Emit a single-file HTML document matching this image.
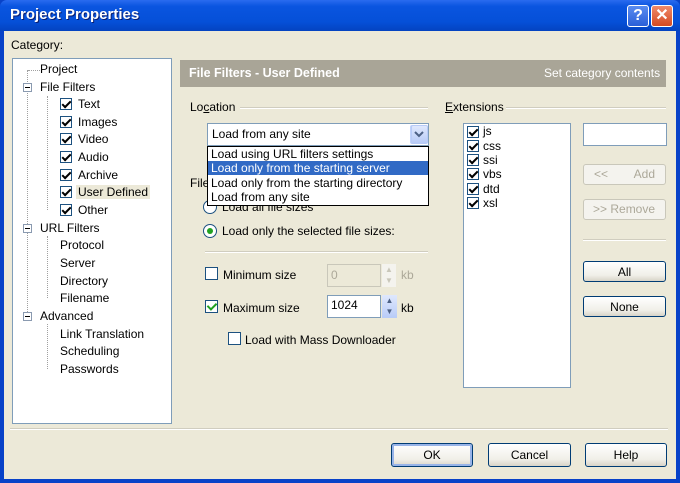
<!DOCTYPE html>
<html><head><style>
*{margin:0;padding:0;box-sizing:border-box}
body{width:680px;height:483px;overflow:hidden;font-family:"Liberation Sans",sans-serif;font-size:12px;color:#000;background:#0842c8;position:relative}
.a{position:absolute;white-space:nowrap}
.win{position:absolute;left:4px;top:31px;width:672px;height:448px;background:#ECE9D8}
.title{position:absolute;left:0;top:0;width:680px;height:31px;background:linear-gradient(#2a6bef,#0a55e0 20%,#0550d8 70%,#0443c0);border-radius:7px 7px 0 0}
.tree{position:absolute;left:12px;top:58px;width:160px;height:366px;background:#fff;border:1px solid #7f9db9}
.cb{position:absolute;width:13px;height:13px;border:1px solid #1c5180;background:#fff}
.cb.k::after{content:"";position:absolute;left:3px;top:0px;width:4px;height:7px;border:solid #21a121;border-width:0 2px 2px 0;transform:rotate(45deg)}
.tcb{position:absolute;width:12px;height:12px;border:1px solid #1c5180;background:#fff}
.tcb::after{content:"";position:absolute;left:3px;top:0px;width:3px;height:7px;border:solid #000;border-width:0 2px 2px 0;transform:rotate(45deg)}
.pm{position:absolute;width:9px;height:9px;border:1px solid #8a9ab0;background:#fff}
.pm::after{content:"";position:absolute;left:1px;top:3px;width:5px;height:1px;background:#000}
.dl{position:absolute;border-left:1px dotted #a0a0a0}
.dh{position:absolute;border-top:1px dotted #a0a0a0;width:12px}
.btn{position:absolute;border:1px solid #003c74;border-radius:3px;background:linear-gradient(#fff,#f0efe8 70%,#d8d4c8);text-align:center;line-height:20px}
.dbtn{position:absolute;border:1px solid #c9c7ba;border-radius:3px;background:#f4f3ee;color:#aca899;line-height:18px}
.sep{position:absolute;height:2px;border-top:1px solid #d0cdbf;border-bottom:1px solid #fff}
.inp{position:absolute;background:#fff;border:1px solid #7f9db9}
</style></head><body>
<div class="title"></div>
<div class="a" style="left:10px;top:6px;color:#fff;font-weight:bold;font-size:15px;text-shadow:1px 1px #0a1e70">Project Properties</div>
<div class="a" style="left:627px;top:5px;width:22px;height:22px;border:1px solid #fff;border-radius:3px;background:linear-gradient(#5a8cf0,#2a5fd8);color:#fff;font-weight:bold;font-size:16px;text-align:center;line-height:20px">?</div>
<div class="a" style="left:651px;top:5px;width:22px;height:22px;border:1px solid #fff;border-radius:3px;background:linear-gradient(#f08a6a,#d44a22);color:#fff;font-weight:bold;font-size:16px;text-align:center;line-height:20px">✕</div>
<div class="win"></div>
<div class="a" style="left:11px;top:38px">Category:</div>
<div class="tree"></div>
<!-- tree lines -->
<div class="dl" style="left:27px;top:70px;height:250px"></div>
<div class="dh" style="left:28px;top:70px"></div>
<div class="dl" style="left:47px;top:96px;height:114px"></div>
<div class="dl" style="left:47px;top:236px;height:62px"></div>
<div class="dl" style="left:47px;top:324px;height:45px"></div>
<div class="a" style="left:40px;top:62px">Project</div>
<div class="pm" style="left:23px;top:83px"></div><div class="a" style="left:40px;top:80px">File Filters</div>
<div class="tcb" style="left:60px;top:98px"></div><div class="a" style="left:78px;top:97px">Text</div>
<div class="tcb" style="left:60px;top:116px"></div><div class="a" style="left:78px;top:115px">Images</div>
<div class="tcb" style="left:60px;top:133px"></div><div class="a" style="left:78px;top:132px">Video</div>
<div class="tcb" style="left:60px;top:151px"></div><div class="a" style="left:78px;top:150px">Audio</div>
<div class="tcb" style="left:60px;top:169px"></div><div class="a" style="left:78px;top:168px">Archive</div>
<div class="tcb" style="left:60px;top:186px"></div><div class="a" style="left:76px;top:185px;background:#ece9d8;padding:0 2px">User Defined</div>
<div class="tcb" style="left:60px;top:204px"></div><div class="a" style="left:78px;top:203px">Other</div>
<div class="pm" style="left:23px;top:224px"></div><div class="a" style="left:40px;top:221px">URL Filters</div>
<div class="a" style="left:60px;top:238px">Protocol</div>
<div class="a" style="left:60px;top:256px">Server</div>
<div class="a" style="left:60px;top:274px">Directory</div>
<div class="a" style="left:60px;top:291px">Filename</div>
<div class="pm" style="left:23px;top:312px"></div><div class="a" style="left:40px;top:309px">Advanced</div>
<div class="a" style="left:60px;top:327px">Link Translation</div>
<div class="a" style="left:60px;top:344px">Scheduling</div>
<div class="a" style="left:60px;top:362px">Passwords</div>

<!-- header -->
<div class="a" style="left:180px;top:60px;width:486px;height:27px;background:#a9a597"></div>
<div class="a" style="left:189px;top:66px;color:#fff;font-weight:bold;font-size:12.5px">File Filters - User Defined</div>
<div class="a" style="left:544px;top:66px;color:#fff">Set category contents</div>

<!-- location -->
<div class="a" style="left:190px;top:100px">Lo<u>c</u>ation</div>
<div class="sep" style="left:240px;top:107px;width:188px"></div>
<div class="a" style="left:445px;top:100px"><u>E</u>xtensions</div>
<div class="sep" style="left:506px;top:107px;width:160px"></div>

<div class="inp" style="left:207px;top:123px;width:222px;height:23px"></div>
<div class="a" style="left:212px;top:127px">Load from any site</div>
<div class="a" style="left:410px;top:125px;width:17px;height:19px;background:#c1d3fb;border-radius:2px;color:#4d6185;text-align:center;font-size:10px;line-height:19px">&#10095;</div>
<div class="a" style="left:411px;top:125px;width:17px;height:19px;background:linear-gradient(#dfe8fd,#b8cbf7);border:1px solid #b8cbf7;border-radius:2px"></div>
<svg class="a" style="left:414px;top:130px" width="10" height="8"><path d="M1 2 L5 6 L9 2" stroke="#4d6185" stroke-width="2" fill="none"/></svg>

<div class="a" style="left:190px;top:176px">File</div>
<div class="a" style="left:203px;top:200px;width:14px;height:14px;border-radius:50%;border:1px solid #1c5180;background:#fff"></div>
<div class="a" style="left:222px;top:200px">Load all file sizes</div>
<div class="a" style="left:203px;top:224px;width:14px;height:14px;border-radius:50%;border:1px solid #1c5180;background:#fff"></div>
<div class="a" style="left:207px;top:228px;width:6px;height:6px;border-radius:50%;background:#21a121"></div>
<div class="a" style="left:222px;top:224px">Load only the selected file sizes:</div>

<!-- dropdown -->
<div class="a" style="left:207px;top:146px;width:222px;height:60px;background:#fff;border:1px solid #000"></div>
<div class="a" style="left:211px;top:147px">Load using URL filters settings</div>
<div class="a" style="left:208px;top:161px;width:220px;height:14px;background:#316ac5"></div>
<div class="a" style="left:211px;top:161px;color:#fff">Load only from the starting server</div>
<div class="a" style="left:211px;top:176px">Load only from the starting directory</div>
<div class="a" style="left:211px;top:190px">Load from any site</div>

<div class="sep" style="left:205px;top:251px;width:223px"></div>

<div class="cb" style="left:205px;top:267px"></div>
<div class="a" style="left:223px;top:268px">Minimum size</div>
<div class="a" style="left:327px;top:264px;width:54px;height:23px;border:1px solid #c9c7ba;background:#ece9d8"></div>
<div class="a" style="left:331px;top:268px;color:#aca899">0</div>
<div class="a" style="left:382px;top:264px;width:14px;height:23px;background:#f4f3ee;color:#c9c7ba;font-size:8px;text-align:center;line-height:11px">▲<br>▼</div>
<div class="a" style="left:401px;top:268px;color:#aca899">kb</div>

<div class="cb k" style="left:205px;top:300px"></div>
<div class="a" style="left:223px;top:301px">Maximum size</div>
<div class="inp" style="left:327px;top:295px;width:54px;height:23px"></div>
<div class="a" style="left:331px;top:298px">1024</div>
<div class="a" style="left:382px;top:295px;width:15px;height:23px;background:linear-gradient(#dfe8fd,#b8cbf7);color:#4d6185;font-size:8px;text-align:center;line-height:11px">▲<br>▼</div>
<div class="a" style="left:401px;top:301px">kb</div>

<div class="cb" style="left:228px;top:332px"></div>
<div class="a" style="left:245px;top:333px">Load with Mass Downloader</div>

<!-- extensions -->
<div class="inp" style="left:463px;top:123px;width:108px;height:265px"></div>
<div class="tcb" style="left:467px;top:126px"></div><div class="a" style="left:483px;top:124px">js</div>
<div class="tcb" style="left:467px;top:140px"></div><div class="a" style="left:483px;top:139px">css</div>
<div class="tcb" style="left:467px;top:154px"></div><div class="a" style="left:483px;top:153px">ssi</div>
<div class="tcb" style="left:467px;top:168px"></div><div class="a" style="left:483px;top:167px">vbs</div>
<div class="tcb" style="left:467px;top:183px"></div><div class="a" style="left:483px;top:182px">dtd</div>
<div class="tcb" style="left:467px;top:197px"></div><div class="a" style="left:483px;top:196px">xsl</div>

<div class="inp" style="left:583px;top:123px;width:84px;height:23px"></div>
<div class="dbtn" style="left:583px;top:164px;width:83px;height:21px"><span style="position:absolute;left:10px">&lt;&lt;</span><span style="position:absolute;right:10px">Add</span></div>
<div class="dbtn" style="left:583px;top:199px;width:83px;height:21px;padding-left:9px">&gt;&gt; Remove</div>
<div class="sep" style="left:583px;top:239px;width:83px"></div>
<div class="btn" style="left:583px;top:261px;width:83px;height:21px">All</div>
<div class="btn" style="left:583px;top:296px;width:83px;height:21px">None</div>

<div class="sep" style="left:10px;top:428px;width:658px"></div>
<div class="btn" style="left:391px;top:443px;width:82px;height:24px;line-height:22px;border-color:#003c74;box-shadow:inset 0 0 0 2px #98b4e8">OK</div>
<div class="btn" style="left:488px;top:443px;width:83px;height:24px;line-height:22px">Cancel</div>
<div class="btn" style="left:585px;top:443px;width:82px;height:24px;line-height:22px">Help</div>
</body></html>
